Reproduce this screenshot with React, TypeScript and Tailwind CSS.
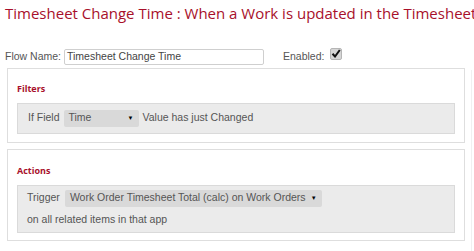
import React from "react";

const body = { fontFamily: '"Liberation Sans", Arial, sans-serif' };
const heading = { fontFamily: '"Open Sans", "DejaVu Sans", sans-serif' };

const Select: React.FC<{ label: string; width: string }> = ({ label, width }) => (
  <div
    className={`flex items-center justify-between h-[17px] pl-[5px] pr-[5px] bg-[#d9d9d9] rounded-[2px] whitespace-nowrap ${width}`}
  >
    <span>{label}</span>
    <span className="text-[6px] text-black ml-[5px]">▼</span>
  </div>
);

const App: React.FC = () => {
  return (
    <div className="relative w-[474px] h-[251px] overflow-hidden bg-white text-[#555]" style={body}>
      {/* Title */}
      <h1
        className="pt-[3px] pl-[5px] text-[15px] leading-[20px] whitespace-nowrap text-[#a8102b]"
        style={heading}
      >
        Timesheet Change Time : When a Work is updated in the Timesheet
      </h1>

      {/* Flow name row */}
      <div className="flex items-center mt-[26px] pl-[5px] text-[10.5px] h-[16px]">
        <span>Flow Name:</span>
        <div className="ml-[3px] w-[200px] h-[16px] flex items-center pl-[2px] border border-[#cfcfcf] rounded-[2px] text-[#444]">
          Timesheet Change Time
        </div>
        <span className="ml-[19px]">Enabled:</span>
        <div className="ml-[6px] -mt-[7px] w-[12px] h-[12px] bg-[#d6d6d6] border border-[#b5b5b5] rounded-[2px] flex items-center justify-center">
          <svg width="10" height="9" viewBox="0 0 10 9">
            <path d="M1.5 4.8 L4 7.5 L8.8 1" stroke="#111" strokeWidth="2" fill="none" />
          </svg>
        </div>
      </div>

      {/* Filters */}
      <div className="ml-[7px] mt-[3px] w-[458px] h-[75px] border border-[#dedede] px-[9px]">
        <div className="pt-[13px] text-[9px] font-bold text-[#a8102b]" style={heading}>
          Filters
        </div>
        <div className="mt-[7px] h-[31px] bg-[#ebebeb] border border-[#dadada] flex items-center pl-[10px] text-[10.5px]">
          <span>If Field</span>
          <div className="ml-[4px]">
            <Select label="Time" width="w-[75px]" />
          </div>
          <span className="ml-[4px]">Value has just Changed</span>
        </div>
      </div>

      {/* Actions */}
      <div className="ml-[7px] mt-[6px] w-[458px] h-[92px] border border-[#dedede] px-[9px]">
        <div className="pt-[14px] text-[9px] font-bold text-[#a8102b]" style={heading}>
          Actions
        </div>
        <div className="mt-[7px] h-[48px] bg-[#ebebeb] border border-[#dadada] pl-[9px] pt-[4px] text-[10.5px]">
          <div className="flex items-center">
            <span>Trigger</span>
            <div className="ml-[5px]">
              <Select label="Work Order Timesheet Total (calc) on Work Orders" width="w-auto" />
            </div>
          </div>
          <div className="mt-[5px]">on all related items in that app</div>
        </div>
      </div>

      {/* faint frame edge on the right */}
      <div className="absolute right-[2px] top-[70px] bottom-0 w-px bg-[#f0f0f0]" />
    </div>
  );
};

export default App;
